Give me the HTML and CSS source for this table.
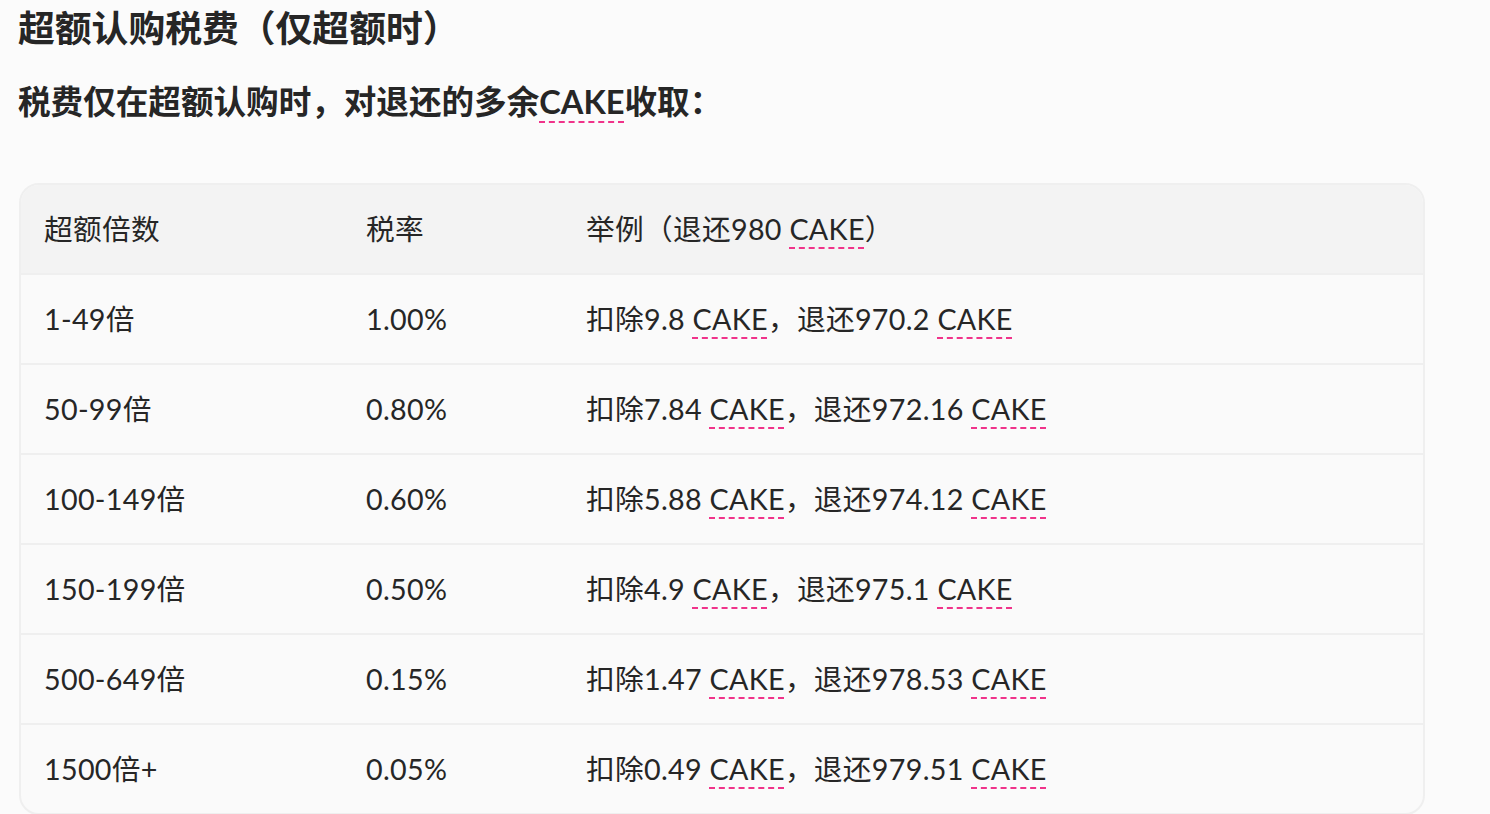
FILE: index.html
```html
<!DOCTYPE html>
<html lang="zh-CN">
<head>
<meta charset="utf-8">
<title>超额认购税费</title>
<link rel="stylesheet" href="styles.css">
</head>
<body>
<div class="page">
  <h2 class="title">超额认购税费（仅超额时）</h2>
  <p class="lead">税费仅在超额认购时，对退还的多余<span class="tip">CAKE</span>收取：</p>
  <div class="table">
    <div class="row head">
      <div class="cell">超额倍数</div>
      <div class="cell">税率</div>
      <div class="cell">举例（退还980 <span class="tip">CAKE</span>）</div>
    </div>
    <div class="row">
      <div class="cell">1-49倍</div>
      <div class="cell">1.00%</div>
      <div class="cell">扣除9.8 <span class="tip">CAKE</span>，退还970.2 <span class="tip">CAKE</span></div>
    </div>
    <div class="row">
      <div class="cell">50-99倍</div>
      <div class="cell">0.80%</div>
      <div class="cell">扣除7.84 <span class="tip">CAKE</span>，退还972.16 <span class="tip">CAKE</span></div>
    </div>
    <div class="row">
      <div class="cell">100-149倍</div>
      <div class="cell">0.60%</div>
      <div class="cell">扣除5.88 <span class="tip">CAKE</span>，退还974.12 <span class="tip">CAKE</span></div>
    </div>
    <div class="row">
      <div class="cell">150-199倍</div>
      <div class="cell">0.50%</div>
      <div class="cell">扣除4.9 <span class="tip">CAKE</span>，退还975.1 <span class="tip">CAKE</span></div>
    </div>
    <div class="row">
      <div class="cell">500-649倍</div>
      <div class="cell">0.15%</div>
      <div class="cell">扣除1.47 <span class="tip">CAKE</span>，退还978.53 <span class="tip">CAKE</span></div>
    </div>
    <div class="row last">
      <div class="cell">1500倍+</div>
      <div class="cell">0.05%</div>
      <div class="cell">扣除0.49 <span class="tip">CAKE</span>，退还979.51 <span class="tip">CAKE</span></div>
    </div>
  </div>
</div>
</body>
</html>
```
FILE: styles.css
```css
html, body {
  margin: 0;
  padding: 0;
  background: #fbfbfb;
}
body {
  font-family: Lato, "Noto Sans CJK SC", sans-serif;
  color: #262626;
}
.page {
  padding: 0 0 0 18px;
}
.title {
  margin: 0;
  font-size: 36.8px;
  line-height: 56px;
  font-weight: 700;
}
.lead {
  margin: 22px 0 0;
  font-size: 32.6px;
  line-height: 48px;
  font-weight: 700;
}
.tip {
  text-decoration: underline dashed #f0338a;
  text-decoration-thickness: 2px;
  text-underline-offset: 7px;
}
.table {
  margin: 57px 0 0 1px;
  width: 1406px;
  box-sizing: border-box;
  border: 2px solid #efefef;
  border-radius: 20px;
  overflow: hidden;
  background: #fafafa;
  font-size: 28.7px;
  letter-spacing: 0.3px;
}
.row {
  display: grid;
  grid-template-columns: 322px 220px 1fr;
  border-bottom: 2px solid #efefef;
}
.row.last {
  border-bottom: none;
}
.row.head {
  background: #f3f3f3;
}
.cell {
  height: 88px;
  line-height: 88px;
  padding: 0 23px;
  white-space: nowrap;
}
```
